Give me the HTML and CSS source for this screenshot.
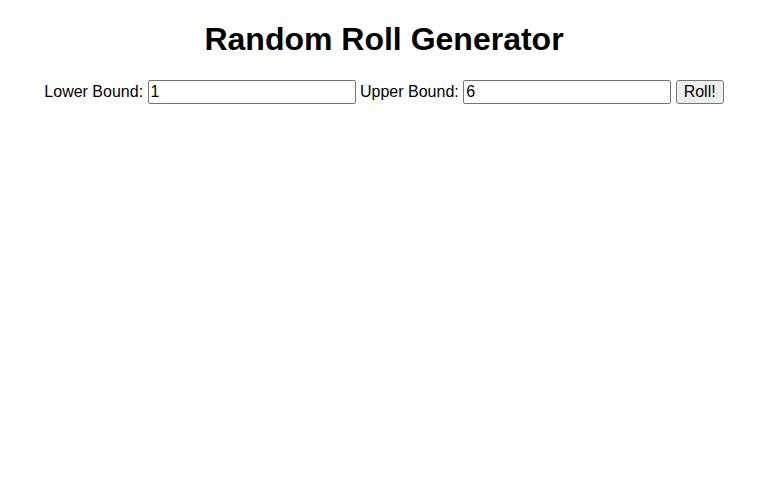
FILE: index.html
```html
<!DOCTYPE html>
<html lang="en">

<head>
    <meta charset="UTF-8" />
    <meta name="viewport" content="width=device-width, initial-scale=1.0" />
    <title>Random Roll Generator</title>
    <link rel="stylesheet" href="styles.css">
</head>

<body>
    <h1>Random Roll Generator</h1>

    <div class="controls">
        <label for="lower">Lower Bound:</label>
        <input type="text" id="lower" value="1">
        <label for="upper">Upper Bound:</label>
        <input type="text" id="upper" value="6">
        <button id="roll">Roll!</button>
    </div>

    <div id="result"></div>
</body>

</html>
```

FILE: styles.css
```css
body {
    margin: 0;
    font-family: "Liberation Sans", Arial, sans-serif;
    text-align: center;
}

h1 {
    font-size: 2em;
    margin: 0.67em 0;
}

.controls input,
.controls button {
    font-family: inherit;
    font-size: 16px;
}

.controls input {
    box-sizing: border-box;
    width: 208px;
    height: 24px;
    padding: 1px 2px;
    border: 1px solid #767676;
    border-radius: 2px;
}

.controls button {
    height: 24px;
    padding: 1px 7px;
    background: #efefef;
    border: 1px solid #767676;
    border-radius: 3px;
    color: #000;
}

#result {
    margin-top: 1rem;
    font-size: 1.5rem;
    font-weight: bold;
}
```
